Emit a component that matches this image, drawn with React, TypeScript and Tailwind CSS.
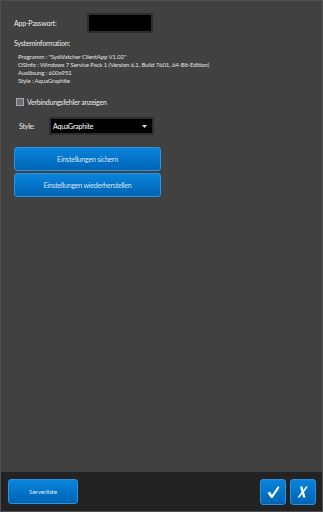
import React from "react";

function BlueButton({ children, className }: { children?: React.ReactNode; className?: string }) {
  return (
    <div
      className={
        "flex items-center justify-center rounded-[3px] border border-[#2a93e4] bg-gradient-to-b from-[#0a84dc] to-[#0064b4] text-[#d6e6f5] " +
        (className ?? "")
      }
    >
      {children}
    </div>
  );
}

export default function App() {
  return (
    <div className="h-[512px] w-[323px] flex flex-col bg-[#414141] border border-[#4f4f4f] font-['Lato',sans-serif] text-[#ececec] tracking-[-0.2px]">
      <div className="flex-1 flex flex-col pl-[13px] pt-[12px]">
        <div className="flex items-center">
          <span className="w-[73px] text-[7px] leading-[8px]">App-Passwort:</span>
          <div className="w-[66px] h-[20px] bg-black border-2 border-[#2e2e2e]" />
        </div>

        <div className="mt-[6px] text-[7px] leading-[8px]">Systeminformation:</div>

        <div className="mt-[6px] pl-[4px] text-[6px] leading-[8px] text-[#e2e2e2] tracking-[-0.1px]">
          <div>Programm : "SysWatcher ClientApp V1.02"</div>
          <div>OSInfo : Windows 7 Service Pack 1 (Version 6.1, Build 7601, 64-Bit-Edition)</div>
          <div>Auslösung : 600x951</div>
          <div>Style : AquaGraphite</div>
        </div>

        <div className="mt-[13px] flex items-center pl-[2px]">
          <div className="w-[8px] h-[8px] bg-[#6e6e6e] border border-[#a8a8a8]" />
          <span className="ml-[3px] text-[7px] leading-[8px]">Verbindungsfehler anzeigen</span>
        </div>

        <div className="mt-[11px] flex items-center">
          <span className="w-[35px] pl-[5px] text-[7px] leading-[8px]">Style:</span>
          <div className="w-[105px] h-[18px] bg-black border-2 border-[#2e2e2e] flex items-center justify-between pl-[2px] pr-[5px]">
            <span className="text-[7px] leading-[8px] text-white">AquaGraphite</span>
            <svg width="5" height="3" viewBox="0 0 5 3">
              <path d="M0 0 L5 0 L2.5 3 Z" fill="#e0e0e0" />
            </svg>
          </div>
        </div>

        <div className="mt-[12px] flex flex-col gap-[2px] w-[147px]">
          <BlueButton className="h-[24px] text-[7px]">Einstellungen sichern</BlueButton>
          <BlueButton className="h-[24px] text-[7px]">Einstellungen wiederherstellen</BlueButton>
        </div>
      </div>

      <div className="h-[39px] bg-[#232323] flex items-center justify-between pl-[7px] pr-[6px]">
        <BlueButton className="w-[70px] h-[25px] text-[6.5px]">Serverliste</BlueButton>
        <div className="flex gap-[4px]">
          <BlueButton className="w-[26px] h-[26px]">
            <svg width="16" height="16" viewBox="0 0 16 16">
              <path d="M2.5 9 L5 7.5 L7 11 L13 2 L14.5 3.5 L7.5 14 L6 14 Z" fill="white" />
            </svg>
          </BlueButton>
          <BlueButton className="w-[26px] h-[26px]">
            <svg width="16" height="16" viewBox="0 0 16 16">
              <path d="M5 2.5 L7.5 2.5 L8.3 6.3 L11 2.5 L13 2.5 L9 8 L10.5 13.5 L8 13.5 L7.3 9.8 L4.5 13.5 L2.5 13.5 L6.5 8 Z" fill="white" />
            </svg>
          </BlueButton>
        </div>
      </div>
    </div>
  );
}
